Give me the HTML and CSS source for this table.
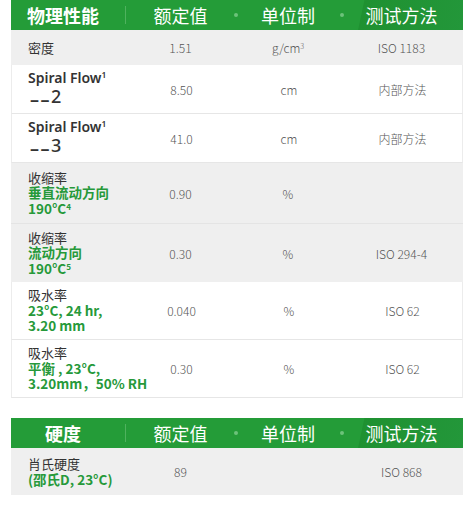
FILE: index.html
```html
<!DOCTYPE html>
<html lang="zh">
<head>
<meta charset="utf-8">
<link rel="stylesheet" href="styles.css">
</head>
<body>
<div class="page">
  <div class="table">
    <div class="head">
      <div class="hcell first"><b>物理性能</b></div>
      <div class="hcell">额定值</div>
      <div class="hcell">单位制</div>
      <div class="hcell last">测试方法</div>
      <span class="sep"></span>
      <span class="dot d1"></span>
      <span class="dot d2"></span>
    </div>
    <div class="row grey h35">
      <div class="label">密度</div>
      <div class="val">1.51</div>
      <div class="val">g/cm<sup>3</sup></div>
      <div class="val">ISO 1183</div>
    </div>
    <div class="row white h49">
      <div class="label"><span class="en">Spiral Flow<sup>1</sup></span><span class="big"><span class="dash">––</span>2</span></div>
      <div class="val">8.50</div>
      <div class="val">cm</div>
      <div class="val">内部方法</div>
    </div>
    <div class="row white h49">
      <div class="label"><span class="en">Spiral Flow<sup>1</sup></span><span class="big"><span class="dash">––</span>3</span></div>
      <div class="val">41.0</div>
      <div class="val">cm</div>
      <div class="val">内部方法</div>
    </div>
    <div class="row grey h60">
      <div class="label">收缩率<span class="g">垂直流动方向</span><span class="g">190°C<sup>4</sup></span></div>
      <div class="val">0.90</div>
      <div class="val">%</div>
      <div class="val"></div>
    </div>
    <div class="row grey h59">
      <div class="label">收缩率<span class="g">流动方向</span><span class="g">190°C<sup>5</sup></span></div>
      <div class="val">0.30</div>
      <div class="val">%</div>
      <div class="val">ISO 294-4</div>
    </div>
    <div class="row white h58">
      <div class="label">吸水率<span class="g">23°C, 24 hr,</span><span class="g">3.20 mm</span></div>
      <div class="val">0.040</div>
      <div class="val">%</div>
      <div class="val">ISO 62</div>
    </div>
    <div class="row white h58">
      <div class="label">吸水率<span class="g">平衡 , 23°C,</span><span class="g">3.20mm，50% RH</span></div>
      <div class="val">0.30</div>
      <div class="val">%</div>
      <div class="val">ISO 62</div>
    </div>
  </div>

  <div class="table second">
    <div class="head">
      <div class="hcell first"><b>硬度</b></div>
      <div class="hcell">额定值</div>
      <div class="hcell">单位制</div>
      <div class="hcell last">测试方法</div>
      <span class="sep"></span>
      <span class="dot d1"></span>
      <span class="dot d2"></span>
    </div>
    <div class="row grey h47">
      <div class="label">肖氏硬度<span class="g">(邵氏D, 23°C)</span></div>
      <div class="val">89</div>
      <div class="val"></div>
      <div class="val">ISO 868</div>
    </div>
  </div>
</div>
</body>
</html>
```
FILE: styles.css
```css
html, body {
  margin: 0;
  padding: 0;
  background: #ffffff;
}
body {
  font-family: "Noto Sans CJK SC", "Noto Sans", sans-serif;
  color: #333333;
}
.page {
  padding-left: 11px;
  width: 452px;
}
.table {
  width: 452px;
}
.second {
  margin-top: 20px;
}
.head {
  position: relative;
  height: 30px;
  display: grid;
  grid-template-columns: 114px 111px 104px 123px;
  background: linear-gradient(102deg, #249c38 0, #249c38 77%, #1f9131 77.2%, #23973a 100%);
  color: #ffffff;
  font-size: 18px;
  line-height: 30px;
  overflow: hidden;
}
.hcell {
  text-align: center;
  font-weight: 400;
}
.hcell.first {
  padding-right: 10px;
}
.hcell b {
  font-weight: 700;
}
.sep {
  position: absolute;
  left: 114px;
  top: 6px;
  width: 1px;
  height: 18px;
  background: #4fb25e;
}
.dot {
  position: absolute;
  top: 13px;
  width: 4px;
  height: 4px;
  border-radius: 50%;
  background: #6cc27a;
}
.d1 { left: 223px; }
.d2 { left: 329px; }

.row {
  display: grid;
  grid-template-columns: 114px 111px 104px 123px;
  align-items: center;
  box-sizing: border-box;
}
.grey {
  background: #efefef;
}
.white {
  background: #ffffff;
  border-left: 1px solid #ececec;
  border-right: 1px solid #ececec;
  border-bottom: 1px solid #e6e6e6;
}
.grey + .grey {
  border-top: 1px solid #e4e4e4;
}
.h35 { height: 35px; }
.h49 { height: 49px; }
.h60 { height: 60px; }
.h59 { height: 59px; }
.h58 { height: 58px; }
.h47 { height: 47px; }

.label {
  padding-left: 17px;
  font-size: 13px;
  line-height: 15.5px;
  display: flex;
  flex-direction: column;
  align-items: flex-start;
  white-space: nowrap;
  color: #333333;
}
.white .label {
  padding-left: 16px;
}
.label .g {
  color: #26993a;
  font-weight: 700;
  font-size: 13.5px;
}
.label .en {
  font-family: "Noto Sans", sans-serif;
  font-weight: 600;
  font-size: 14px;
  line-height: 17px;
  color: #333333;
}
.label .big {
  font-family: "Noto Sans", sans-serif;
  font-weight: 500;
  font-size: 18px;
  line-height: 19px;
  color: #333333;
  padding-top: 1px;
}
.label .dash {
  padding-left: 2px;
  letter-spacing: 1.5px;
  font-weight: 600;
  vertical-align: -0.18em;
}
sup {
  font-size: 0.6em;
  line-height: 0;
  vertical-align: 0.55em;
}
.val {
  text-align: center;
  font-size: 12px;
  font-weight: 300;
  color: #555555;
  white-space: nowrap;
}
```
